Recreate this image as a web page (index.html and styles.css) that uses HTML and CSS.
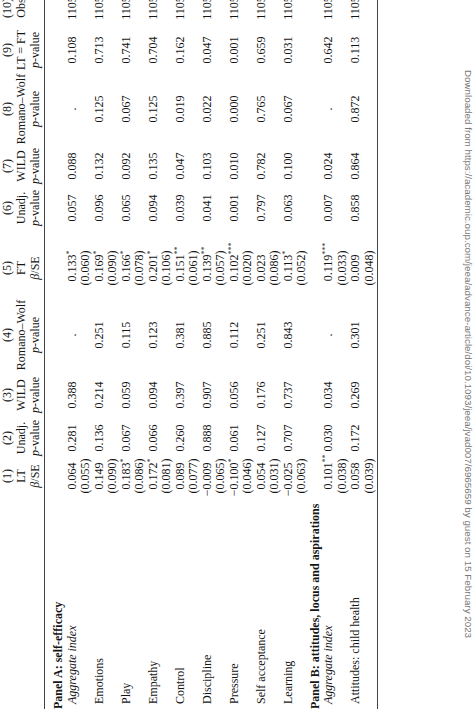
FILE: index.html
```html
<!DOCTYPE html>
<html>
<head>
<meta charset="utf-8">
<link rel="stylesheet" href="styles.css">
</head>
<body>
<div class="frame">
  <div class="sheet">
    <table class="tbl">
      <colgroup>
        <col class="c-lab"><col class="c1"><col class="c2"><col class="c3"><col class="c4"><col class="c5"><col class="c6"><col class="c7"><col class="c8"><col class="c9"><col class="c10">
      </colgroup>
      <thead>
        <tr>
          <th></th>
          <th><div class="hd"><span>(1)</span><span>LT</span><span><i>β</i>/SE</span></div></th>
          <th><div class="hd"><span>(2)</span><span>Unadj.</span><span><i>p</i>-value</span></div></th>
          <th><div class="hd"><span>(3)</span><span>WILD</span><span><i>p</i>-value</span></div></th>
          <th><div class="hd"><span>(4)</span><span>Romano–Wolf</span><span><i>p</i>-value</span></div></th>
          <th><div class="hd"><span>(5)</span><span>FT</span><span><i>β</i>/SE</span></div></th>
          <th><div class="hd"><span>(6)</span><span>Unadj.</span><span><i>p</i>-value</span></div></th>
          <th><div class="hd"><span>(7)</span><span>WILD</span><span><i>p</i>-value</span></div></th>
          <th><div class="hd"><span>(8)</span><span>Romano–Wolf</span><span><i>p</i>-value</span></div></th>
          <th><div class="hd"><span>(9)</span><span>LT = FT</span><span><i>p</i>-value</span></div></th>
          <th><div class="hd"><span>(10)</span><span>Obs</span><span>&nbsp;</span></div></th>
        </tr>
      </thead>
      <tbody>
        <tr class="panel first"><td class="lab" colspan="11">Panel A: self-efficacy</td></tr>
        <tr>
          <td class="lab sub"><i>Aggregate index</i></td>
          <td>0.064<br>(0.055)</td><td>0.281</td><td>0.388</td><td>.</td>
          <td>0.133<span class="st">*</span><br>(0.060)</td><td>0.057</td><td>0.088</td><td>.</td><td>0.108</td><td>1105</td>
        </tr>
        <tr>
          <td class="lab sub">Emotions</td>
          <td>0.149<br>(0.090)</td><td>0.136</td><td>0.214</td><td>0.251</td>
          <td>0.169<span class="st">*</span><br>(0.090)</td><td>0.096</td><td>0.132</td><td>0.125</td><td>0.713</td><td>1105</td>
        </tr>
        <tr>
          <td class="lab sub">Play</td>
          <td>0.183<span class="st">*</span><br>(0.086)</td><td>0.067</td><td>0.059</td><td>0.115</td>
          <td>0.166<span class="st">*</span><br>(0.078)</td><td>0.065</td><td>0.092</td><td>0.067</td><td>0.741</td><td>1105</td>
        </tr>
        <tr>
          <td class="lab sub">Empathy</td>
          <td>0.172<span class="st">*</span><br>(0.081)</td><td>0.066</td><td>0.094</td><td>0.123</td>
          <td>0.201<span class="st">*</span><br>(0.106)</td><td>0.094</td><td>0.135</td><td>0.125</td><td>0.704</td><td>1105</td>
        </tr>
        <tr>
          <td class="lab sub">Control</td>
          <td>0.089<br>(0.077)</td><td>0.260</td><td>0.397</td><td>0.381</td>
          <td>0.151<span class="st">**</span><br>(0.061)</td><td>0.039</td><td>0.047</td><td>0.019</td><td>0.162</td><td>1105</td>
        </tr>
        <tr>
          <td class="lab sub">Discipline</td>
          <td><span class="neg">−</span>0.009<br>(0.065)</td><td>0.888</td><td>0.907</td><td>0.885</td>
          <td>0.139<span class="st">**</span><br>(0.057)</td><td>0.041</td><td>0.103</td><td>0.022</td><td>0.047</td><td>1105</td>
        </tr>
        <tr>
          <td class="lab sub">Pressure</td>
          <td><span class="neg">−</span>0.100<span class="st">*</span><br>(0.046)</td><td>0.061</td><td>0.056</td><td>0.112</td>
          <td>0.102<span class="st">***</span><br>(0.020)</td><td>0.001</td><td>0.010</td><td>0.000</td><td>0.001</td><td>1105</td>
        </tr>
        <tr>
          <td class="lab sub">Self acceptance</td>
          <td>0.054<br>(0.031)</td><td>0.127</td><td>0.176</td><td>0.251</td>
          <td>0.023<br>(0.086)</td><td>0.797</td><td>0.782</td><td>0.765</td><td>0.659</td><td>1105</td>
        </tr>
        <tr>
          <td class="lab sub">Learning</td>
          <td><span class="neg">−</span>0.025<br>(0.063)</td><td>0.707</td><td>0.737</td><td>0.843</td>
          <td>0.113<span class="st">*</span><br>(0.052)</td><td>0.063</td><td>0.100</td><td>0.067</td><td>0.031</td><td>1105</td>
        </tr>
        <tr class="panel"><td class="lab" colspan="11">Panel B: attitudes, locus and aspirations</td></tr>
        <tr>
          <td class="lab sub"><i>Aggregate index</i></td>
          <td>0.101<span class="st">**</span><br>(0.038)</td><td>0.030</td><td>0.034</td><td>.</td>
          <td>0.119<span class="st">***</span><br>(0.033)</td><td>0.007</td><td>0.024</td><td>.</td><td>0.642</td><td>1105</td>
        </tr>
        <tr class="last">
          <td class="lab sub">Attitudes: child health</td>
          <td>0.058<br>(0.039)</td><td>0.172</td><td>0.269</td><td>0.301</td>
          <td>0.009<br>(0.048)</td><td>0.858</td><td>0.864</td><td>0.872</td><td>0.113</td><td>1105</td>
        </tr>
      </tbody>
    </table>
  </div>
</div>
<div class="mark">Downloaded from https://academic.oup.com/jeea/advance-article/doi/10.1093/jeea/jvad007/6965659 by guest on 15 February 2023</div>
</body>
</html>
```

FILE: styles.css
```css
html, body {
  margin: 0;
  padding: 0;
  background: #fff;
}

body {
  width: 474px;
  height: 714px;
  overflow: hidden;
  display: flex;
}

.frame {
  flex: none;
  width: 462px;
  height: 714px;
  overflow: hidden;
}

.sheet {
  width: 760px;
  height: 462px;
  transform-origin: 0 0;
  transform: translateY(714px) rotate(-90deg);
}

.tbl {
  border-collapse: collapse;
  table-layout: fixed;
  width: 727px;
  margin-left: 3px;
  margin-top: -2px;
  font-family: "Liberation Serif", "Times New Roman", serif;
  font-size: 12px;
  color: #151515;
}

.c-lab { width: 213px; }
.c1 { width: 40px; }
.c2 { width: 36px; }
.c3 { width: 50px; }
.c4 { width: 70px; }
.c5 { width: 64px; }
.c6 { width: 56px; }
.c7 { width: 28px; }
.c8 { width: 86px; }
.c9 { width: 32px; }
.c10 { width: 52px; }

.tbl th {
  font-weight: normal;
  padding: 0 0 2px 0;
  vertical-align: bottom;
  border-bottom: 1px solid #444;
}

.hd {
  display: flex;
  flex-direction: column;
  align-items: center;
  line-height: 14px;
  white-space: nowrap;
}

.tbl td {
  line-height: 13.5px;
  padding: 0;
  text-align: center;
  vertical-align: top;
  white-space: nowrap;
}

.tbl td.lab {
  text-align: left;
}

.tbl td.sub {
  padding-left: 5px;
}

.panel td {
  font-weight: bold;
}

.first td {
  padding-top: 7px;
}

.last td {
  border-bottom: 1px solid #444;
  padding-bottom: 1px;
}

.st {
  display: inline-block;
  width: 0;
  font-size: 8px;
  line-height: 1;
  vertical-align: 4px;
}

.neg {
  margin-left: -0.564em;
}

.mark {
  flex: none;
  width: 12px;
  writing-mode: vertical-rl;
  font-family: "Liberation Sans", Arial, sans-serif;
  font-size: 9.8px;
  line-height: 12px;
  color: #777;
  padding-top: 70px;
  white-space: nowrap;
}
```
